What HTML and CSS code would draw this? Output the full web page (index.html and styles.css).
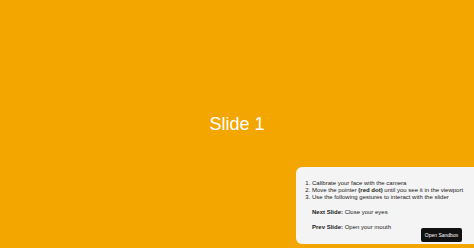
FILE: index.html
```html
<!DOCTYPE html>
<html lang="en">
<head>
    <meta charset="UTF-8">
    <meta name="viewport" content="width=device-width, initial-scale=1.0">
    <title>Slides</title>

    <link rel="stylesheet" href="styles.css">
</head>
<body>
    <div class="slide">
        <h1 class="slide-title">Slide 1</h1>
    </div>

    <div class="help">
        <ol class="steps">
            <li>Calibrate your face with the camera</li>
            <li>Move the pointer <b>(red dot)</b> until you see it in the viewport</li>
            <li>Use the following gestures to interact with the slider</li>
        </ol>
        <p class="gesture"><b>Next Slide:</b> Close your eyes</p>
        <p class="gesture"><b>Prev Slide:</b> Open your mouth</p>
    </div>

    <button class="sandbox">Open Sandbox</button>
</body>
</html>
```

FILE: styles.css
```css
html, body {
    height: 100%;
}

body {
    margin: 0;
    background-color: #f3a600;
    font-family: 'Liberation Sans', Arial, sans-serif;
    overflow: hidden;
}

.slide {
    height: 100%;
    display: flex;
    align-items: center;
    justify-content: center;
}

.slide-title {
    margin: 0;
    color: #ffffff;
    font-size: 18px;
    font-weight: normal;
}

/* instructions box, sits over the slide */
.help {
    position: absolute;
    left: 296px;
    right: -8px;
    bottom: 4px;
    height: 77px;
    box-sizing: border-box;
    padding: 13px 0 0 16px;
    background-color: #f4f4f4;
    border-radius: 6px;
    color: #1a1a1a;
    font-size: 6px;
    line-height: 7px;
}

.steps {
    margin: 0;
    padding: 0;
}

.gesture {
    margin: 8px 0 0 0;
}

.gesture + .gesture {
    margin-top: 8px;
}

.sandbox {
    position: absolute;
    right: 12px;
    bottom: 6px;
    width: 41px;
    height: 14px;
    padding: 0;
    border: none;
    border-radius: 2px;
    background-color: #111111;
    color: #ffffff;
    font-family: 'Liberation Sans', Arial, sans-serif;
    font-size: 5px;
}
```
